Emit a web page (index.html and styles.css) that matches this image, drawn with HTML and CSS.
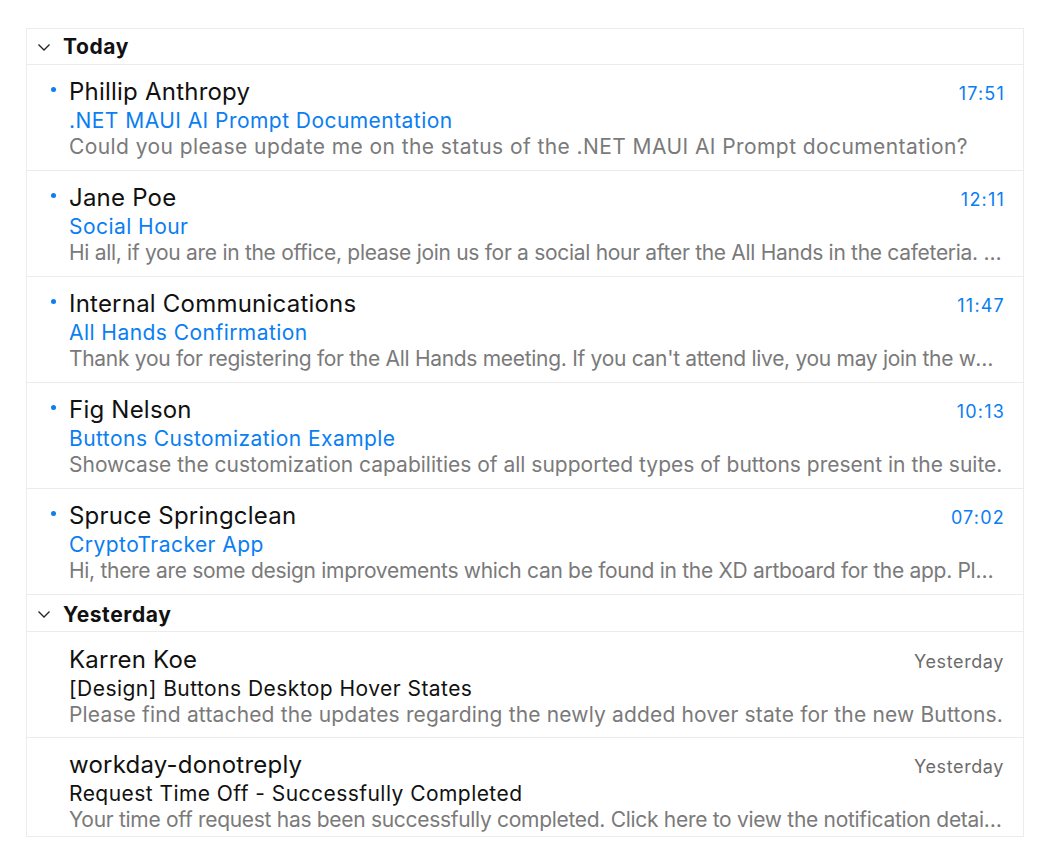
FILE: index.html
```html
<!DOCTYPE html>
<html lang="en">
<head>
  <meta charset="UTF-8">
  <meta name="viewport" content="width=device-width, initial-scale=1">
  <title>Inbox</title>
  <link rel="stylesheet" href="styles.css">
</head>
<body>
  <div class="list">
    <div class="group-header">
      <svg class="chevron" width="14" height="14" viewBox="0 0 14 14"><path d="M1.5 4.5 L7 10 L12.5 4.5" fill="none" stroke="#222" stroke-width="1.3"/></svg>
      <span>Today</span>
    </div>

    <div class="item unread">
      <div class="line"><span class="sender">Phillip Anthropy</span><span class="time clock">17:51</span></div>
      <div class="subject">.NET MAUI AI Prompt Documentation</div>
      <div class="preview">Could you please update me on the status of the .NET MAUI AI Prompt documentation?</div>
    </div>
    <div class="item unread">
      <div class="line"><span class="sender">Jane Poe</span><span class="time clock">12:11</span></div>
      <div class="subject">Social Hour</div>
      <div class="preview tight">Hi all, if you are in the office, please join us for a social hour after the All Hands in the cafeteria. Snacks and drinks will be provided.</div>
    </div>
    <div class="item unread">
      <div class="line"><span class="sender">Internal Communications</span><span class="time clock">11:47</span></div>
      <div class="subject">All Hands Confirmation</div>
      <div class="preview tight">Thank you for registering for the All Hands meeting. If you can't attend live, you may join the webcast later.</div>
    </div>
    <div class="item unread">
      <div class="line"><span class="sender">Fig Nelson</span><span class="time clock">10:13</span></div>
      <div class="subject">Buttons Customization Example</div>
      <div class="preview fit">Showcase the customization capabilities of all supported types of buttons present in the suite.</div>
    </div>
    <div class="item unread">
      <div class="line"><span class="sender">Spruce Springclean</span><span class="time clock">07:02</span></div>
      <div class="subject">CryptoTracker App</div>
      <div class="preview tight">Hi, there are some design improvements which can be found in the XD artboard for the app. Please take a look.</div>
    </div>

    <div class="group-header second">
      <svg class="chevron" width="14" height="14" viewBox="0 0 14 14"><path d="M1.5 4.5 L7 10 L12.5 4.5" fill="none" stroke="#222" stroke-width="1.3"/></svg>
      <span>Yesterday</span>
    </div>

    <div class="item">
      <div class="line"><span class="sender">Karren Koe</span><span class="time">Yesterday</span></div>
      <div class="subject">[Design] Buttons Desktop Hover States</div>
      <div class="preview snug">Please find attached the updates regarding the newly added hover state for the new Buttons.</div>
    </div>
    <div class="item">
      <div class="line"><span class="sender">workday-donotreply</span><span class="time">Yesterday</span></div>
      <div class="subject">Request Time Off - Successfully Completed</div>
      <div class="preview tight">Your time off request has been successfully completed. Click here to view the notification details.</div>
    </div>
  </div>
</body>
</html>
```

FILE: styles.css
```css
body {
  margin: 0;
  padding: 28px 26px 0 26px;
  font-family: Inter, "Open Sans", sans-serif;
  background: #fff;
  color: #000;
}

.list {
  border: 1px solid #ececec;
  height: 809px;
  box-sizing: border-box;
  overflow: hidden;
}

.group-header {
  display: flex;
  align-items: center;
  height: 35px;
  padding-left: 10px;
  border-bottom: 1px solid #ececec;
  font-size: 21px;
  font-weight: 700;
  letter-spacing: 0.6px;
  color: #111;
}
.group-header.second { height: 37px; padding-top: 2px; box-sizing: border-box; }
.group-header .chevron { margin-right: 12px; }

.item {
  position: relative;
  height: 106px;
  padding: 12px 19px 0 42px;
  box-sizing: border-box;
  border-bottom: 1px solid #ececec;
}
.group-header.second + .item { padding-top: 13px; }

.item.unread::before {
  content: "";
  position: absolute;
  left: 24px;
  top: 22px;
  width: 5px;
  height: 5px;
  border-radius: 50%;
  background: #0a7ef2;
}

.line { display: flex; justify-content: space-between; align-items: baseline; }

.sender { font-size: 24px; line-height: 30px; letter-spacing: 0.22px; color: #111; }
.time {
  font-size: 18px;
  letter-spacing: 0.6px;
  color: #0a7ef2;
}
.time.clock { letter-spacing: 1.2px; margin-right: -1px; }
.item:not(.unread) .time { color: #6b6b6b; }

.subject {
  font-size: 21px;
  line-height: 27px;
  letter-spacing: 0.45px;
  color: #0a7ef2;
}
.item:not(.unread) .subject { color: #111; }

.preview {
  font-size: 21px;
  line-height: 26px;
  letter-spacing: 0.42px;
  color: #7a7a7a;
  white-space: nowrap;
  overflow: hidden;
  text-overflow: ellipsis;
}
.preview.tight { letter-spacing: -0.3px; }
.preview.fit { letter-spacing: 0; }
.preview.snug { letter-spacing: 0.16px; }
```
